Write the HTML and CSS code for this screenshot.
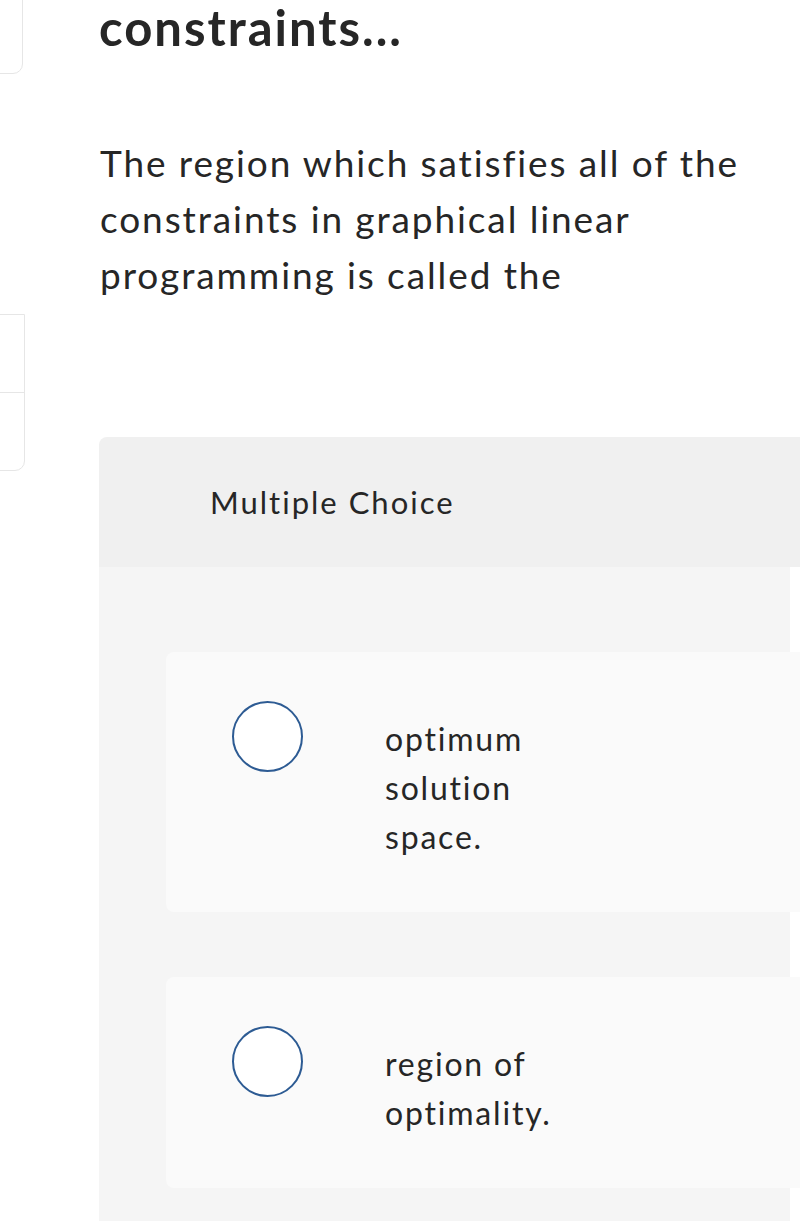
FILE: index.html
```html
<!DOCTYPE html>
<html>
<head>
<meta charset="utf-8">
<link rel="stylesheet" href="styles.css">
</head>
<body>
<div class="page">
  <aside class="rail">
    <div class="rail-box rail-top"></div>
    <div class="rail-box rail-group">
      <div class="rail-item"></div>
      <div class="rail-item"></div>
    </div>
  </aside>
  <main class="main">
    <h1 class="title">constraints...</h1>
    <p class="question">The region which satisfies all of the constraints in graphical linear programming is called the</p>
    <section class="card">
      <div class="card-head">Multiple Choice</div>
      <div class="card-body">
        <label class="option">
          <span class="radio"></span>
          <span class="opt-text">optimum solution space.</span>
        </label>
        <label class="option">
          <span class="radio"></span>
          <span class="opt-text">region of optimality.</span>
        </label>
      </div>
    </section>
  </main>
</div>
</body>
</html>
```

FILE: styles.css
```css
html, body {
  margin: 0;
  padding: 0;
  background: #ffffff;
  overflow: hidden;
}
body {
  width: 800px;
  height: 1221px;
  font-family: Lato, "Open Sans", sans-serif;
  font-variant-ligatures: none;
  color: #262626;
}
.page {
  display: grid;
  grid-template-columns: 24px 1fr;
  width: 800px;
}
.rail {
  display: flex;
  flex-direction: column;
}
.rail-box {
  margin-left: -20px;
  width: 43px;
  border: 1.5px solid #e6e6e6;
  border-radius: 0 0 10px 0;
  box-sizing: border-box;
}
.rail-top {
  height: 84px;
  margin-top: -10px;
}
.rail-group {
  width: 45px;
  margin-top: 240px;
  display: flex;
  flex-direction: column;
}
.rail-item {
  height: 77px;
}
.rail-item + .rail-item {
  border-top: 1.5px solid #e6e6e6;
}
.main {
  margin-left: 75px;
  min-width: 0;
}
.title {
  margin: 0;
  font-size: 49px;
  line-height: 54px;
  font-weight: 700;
  letter-spacing: 2px;
  color: #262626;
}
.question {
  margin: 81px 0 0 1px;
  font-size: 37px;
  line-height: 56px;
  letter-spacing: 1.9px;
  width: 680px;
  color: #262626;
}
.card {
  margin-top: 134px;
  width: 760px;
}
.card-head {
  background: #f0f0f0;
  border-radius: 8px 0 0 0;
  height: 130px;
  box-sizing: border-box;
  padding-left: 111px;
  display: flex;
  align-items: center;
  font-size: 31px;
  letter-spacing: 2px;
  color: #262626;
}
.card-body {
  background: #f5f5f5;
  width: 691px;
  padding: 85px 0 40px 67px;
  box-sizing: border-box;
  display: flex;
  flex-direction: column;
  gap: 65px;
}
.option {
  display: flex;
  align-items: flex-start;
  background: #fafafa;
  border-radius: 8px 0 0 8px;
  width: 680px;
  padding: 49px 0 51px 66px;
  box-sizing: border-box;
}
.radio {
  flex: none;
  width: 71px;
  height: 71px;
  border: 2px solid #2d5b93;
  border-radius: 50%;
  background: #ffffff;
  box-sizing: border-box;
}
.opt-text {
  margin-left: 82px;
  margin-top: 13px;
  width: 190px;
  font-size: 32px;
  line-height: 49px;
  letter-spacing: 1.8px;
  color: #262626;
}
```
